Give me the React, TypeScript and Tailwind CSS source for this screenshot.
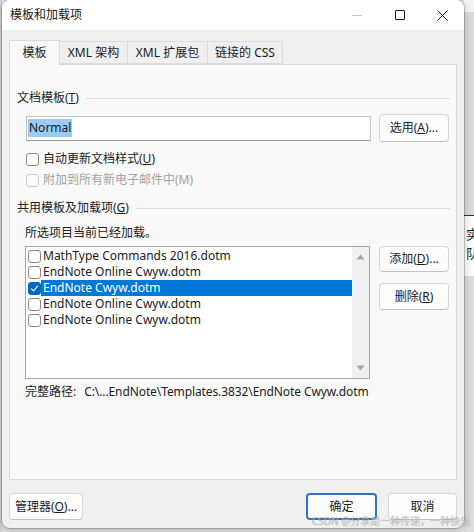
import React from "react";

function Box({ checked = false, disabled = false }: { checked?: boolean; disabled?: boolean }) {
  if (checked) {
    return (
      <span className="w-[13px] h-[13px] rounded-[3px] bg-[#0067c0] border border-[#0067c0] flex items-center justify-center shrink-0">
        <svg width="9" height="9" viewBox="0 0 9 9" fill="none">
          <path d="M1.5 4.8 L3.6 6.8 L7.6 2.2" stroke="white" strokeWidth="1.1" strokeLinecap="round" strokeLinejoin="round" />
        </svg>
      </span>
    );
  }
  return (
    <span
      className={
        disabled
          ? "w-[13px] h-[13px] rounded-[3px] border border-[#cdcdcd] bg-[#fbfbfb] shrink-0"
          : "w-[13px] h-[13px] rounded-[3px] border border-[#8a8a8a] bg-[#fdfdfd] shrink-0"
      }
    />
  );
}

function Btn({ children, cls }: { children: React.ReactNode; cls: string }) {
  return (
    <div
      className={
        "flex items-center justify-center rounded-[4px] bg-[#fdfdfd] border border-[#d6d6d6] border-b-[#c2c2c2] text-[12px] text-[#1b1b1b] " +
        cls
      }
    >
      {children}
    </div>
  );
}

function Group({ children }: { children: React.ReactNode }) {
  return (
    <div className="flex items-center h-[16px] ml-[7px] mr-[6px]">
      <span className="whitespace-nowrap">{children}</span>
      <div className="flex-1 h-px bg-[#dddddd] ml-[7px]" />
    </div>
  );
}

const items = [
  { t: "MathType Commands 2016.dotm", c: false },
  { t: "EndNote Online Cwyw.dotm", c: false },
  { t: "EndNote Cwyw.dotm", c: true },
  { t: "EndNote Online Cwyw.dotm", c: false },
  { t: "EndNote Online Cwyw.dotm", c: false },
];

export default function App() {
  return (
    <div className="relative w-[474px] h-[532px] overflow-hidden bg-[#e4e4e4] flex font-['Noto_Sans','Noto_Sans_CJK_SC',sans-serif] text-[12px] text-[#1b1b1b]">
      <div className="w-[2px] h-full bg-[#d4d4d4] shrink-0" />
      {/* window */}
      <div className="w-[462px] h-[528px] shrink-0 rounded-[8px] bg-[#f0f0f0] flex flex-col overflow-hidden shadow-[0_0_0_1px_rgba(0,0,0,0.18),0_2px_10px_rgba(0,0,0,0.25)] relative z-10">
        {/* title bar */}
        <div className="h-[30px] bg-white flex items-center shrink-0">
          <span className="pl-[8px] text-[12px] leading-[16px]">模板和加载项</span>
          <div className="ml-auto flex h-full">
            <div className="w-[43px] h-full flex items-center justify-center">
              <div className="w-[10px] h-px bg-[#c8c8c8]" />
            </div>
            <div className="w-[43px] h-full flex items-center justify-center">
              <div className="w-[10px] h-[10px] border border-[#1b1b1b] rounded-[1px]" />
            </div>
            <div className="w-[43px] h-full flex items-center justify-center">
              <svg width="11" height="11" viewBox="0 0 11 11">
                <path d="M0.5 0.5 L10.5 10.5 M10.5 0.5 L0.5 10.5" stroke="#1b1b1b" strokeWidth="1" />
              </svg>
            </div>
          </div>
        </div>

        {/* body */}
        <div className="flex-1 flex flex-col px-[7px] pt-[9px]">
          {/* tabs */}
          <div className="flex items-end h-[25px] relative z-10">
            <div className="w-[51px] h-[25px] bg-[#f9f9f9] border border-b-0 border-[#d9d9d9] flex items-center justify-center -mb-px pb-px">
              模板
            </div>
            <div className="w-[68px] h-[23px] bg-[#f0f0f0] border border-l-0 border-[#dcdcdc] flex items-center justify-center">
              XML 架构
            </div>
            <div className="w-[80px] h-[23px] bg-[#f0f0f0] border border-l-0 border-[#dcdcdc] flex items-center justify-center">
              XML 扩展包
            </div>
            <div className="w-[75px] h-[23px] bg-[#f0f0f0] border border-l-0 border-[#dcdcdc] flex items-center justify-center">
              链接的 CSS
            </div>
          </div>

          {/* panel */}
          <div className="h-[416px] bg-[#f9f9f9] border border-[#d9d9d9] flex flex-col">
            <div className="mt-[25px]">
              <Group>
                文档模板(<span className="underline">T</span>)
              </Group>
            </div>

            <div className="flex items-center h-[28px] mt-[8px] ml-[16px]">
              <div className="w-[345px] h-[25px] bg-white border border-[#c4c4c4] border-b-[#9a9a9a] flex items-center pl-[1px]">
                <span className="bg-[#9ccaf0] text-[#0d1a2a] px-px leading-[18px] text-[12px]">Normal</span>
              </div>
              <Btn cls="w-[70px] h-[28px] ml-[8px]">
                选用(<span className="underline">A</span>)...
              </Btn>
            </div>

            <div className="flex items-center h-[16px] mt-[9px] ml-[16px] gap-[4px]">
              <Box />
              <span>
                自动更新文档样式(<span className="underline">U</span>)
              </span>
            </div>
            <div className="flex items-center h-[16px] mt-[5px] ml-[16px] gap-[4px] text-[#a3a3a3]">
              <Box disabled />
              <span>附加到所有新电子邮件中(M)</span>
            </div>

            <div className="mt-[12px]">
              <Group>
                共用模板及加载项(<span className="underline">G</span>)
              </Group>
            </div>

            <div className="h-[16px] leading-[16px] mt-[9px] ml-[15px]">所选项目当前已经加载。</div>

            <div className="flex mt-[5px] ml-[15px]">
              <div className="w-[345px] h-[133px] bg-white border border-[#a8a8a8] flex">
                <div className="flex-1 pt-[1px] flex flex-col">
                  {items.map((it, i) => (
                    <div key={i} className="flex items-center h-[16px]">
                      <div className="w-[15px] pl-[2px] flex items-center">
                        <Box checked={it.c} />
                      </div>
                      <div
                        className={
                          it.c
                            ? "flex-1 h-[16px] bg-[#0078d7] text-white pl-[2px] leading-[16px] text-[12px] whitespace-nowrap"
                            : "flex-1 h-[16px] pl-[2px] leading-[16px] text-[12px] whitespace-nowrap"
                        }
                      >
                        {it.t}
                      </div>
                    </div>
                  ))}
                </div>
                <div className="w-[17px] h-full bg-[#f0f0f0] flex flex-col items-center justify-between py-[7px]">
                  <svg width="9" height="6" viewBox="0 0 9 6">
                    <path d="M4.5 0.5 L8.5 5.5 L0.5 5.5 Z" fill="#a6a6a6" />
                  </svg>
                  <svg width="9" height="6" viewBox="0 0 9 6">
                    <path d="M0.5 0.5 L8.5 0.5 L4.5 5.5 Z" fill="#a6a6a6" />
                  </svg>
                </div>
              </div>
              <div className="flex flex-col ml-[9px]">
                <Btn cls="w-[70px] h-[26px]">
                  添加(<span className="underline">D</span>)...
                </Btn>
                <Btn cls="w-[70px] h-[27px] mt-[11px]">
                  删除(<span className="underline">R</span>)
                </Btn>
              </div>
            </div>

            <div className="flex h-[16px] leading-[16px] mt-[5px] ml-[15px] whitespace-nowrap text-[12px]">
              <span>完整路径:</span>
              <span className="ml-[8px] tracking-[-0.1px]">C:\...EndNote\Templates.3832\EndNote Cwyw.dotm</span>
            </div>
          </div>

          {/* bottom buttons */}
          <div className="flex items-center mt-[13px]">
            <Btn cls="w-[74px] h-[27px]">
              管理器(<span className="underline">O</span>)...
            </Btn>
            <div className="ml-auto flex gap-[11px]">
              <div className="w-[71px] h-[27px] rounded-[4px] bg-[#fdfdfd] border-2 border-[#2f74c4] flex items-center justify-center">
                确定
              </div>
              <Btn cls="w-[69px] h-[27px]">取消</Btn>
            </div>
          </div>
        </div>
      </div>

      {/* right background strip */}
      <div className="flex-1 flex flex-col overflow-hidden">
        <div className="h-[12px] bg-[#f4f4f4]" />
        <div className="h-[203px] bg-[#dcdcdc]" />
        <div className="h-px bg-[#333333]" />
        <div className="h-[60px] bg-white flex flex-col pt-[9px] pl-[2px] leading-[19px] text-[13px] whitespace-nowrap">
          <span>实</span>
          <span>队</span>
        </div>
        <div className="flex-1 bg-[#dedede]" />
      </div>

      {/* watermark */}
      <div className="absolute left-[312px] top-[515px] z-20 text-[10px] leading-[13px] text-[rgba(200,200,200,0.7)] whitespace-nowrap [text-shadow:0_0_1px_rgba(120,120,120,0.5)]">
        CSDN @分享是一种传递，一种快乐
      </div>
    </div>
  );
}
